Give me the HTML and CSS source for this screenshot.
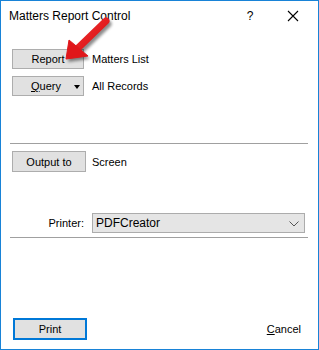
FILE: index.html
```html
<!DOCTYPE html>
<html>
<head>
<meta charset="utf-8">
<link rel="stylesheet" href="styles.css">
</head>
<body>
<div class="window">
  <div class="titlebar">
    <span class="title">Matters Report Control</span>
    <span class="help">?</span>
    <span class="close"><svg width="12" height="12" viewBox="0 0 12 12"><path d="M1 1 L11 11 M11 1 L1 11" stroke="#000" stroke-width="1.1" fill="none"/></svg></span>
  </div>
  <div class="body">
    <div class="row r1"><button class="btn report">Report</button><span class="val">Matters List</span></div>
    <div class="row r2"><button class="btn query"><span class="lbl"><u>Q</u>uery</span><span class="tri"></span></button><span class="val">All Records</span></div>
    <div class="sep s1"></div>
    <div class="row r3"><button class="btn output">Output to</button><span class="val">Screen</span></div>
    <div class="row printer">
      <span class="plabel">Printer:</span>
      <div class="select"><span>PDFCreator</span><svg class="chev" width="10" height="6" viewBox="0 0 10 6"><path d="M0.5 0.5 L5 5 L9.5 0.5" stroke="#555" stroke-width="1" fill="none"/></svg></div>
    </div>
    <div class="sep s2"></div>
    <div class="footer"><button class="btn print">Print</button><span class="cancel"><u>C</u>ancel</span></div>
  </div>
  <svg class="arrow" width="319" height="350" viewBox="0 0 319 350">
    <defs>
      <filter id="blur" x="-20%" y="-20%" width="140%" height="140%"><feGaussianBlur stdDeviation="1.5"/></filter>
      <linearGradient id="red" x1="0" y1="0" x2="1" y2="1">
        <stop offset="0" stop-color="#f03030"/>
        <stop offset="1" stop-color="#d80f12"/>
      </linearGradient>
    </defs>
    <g transform="translate(2,3)" filter="url(#blur)" opacity="0.45">
      <path d="M78 48 L106 21" stroke="#000" stroke-width="7" stroke-linecap="round"/>
      <path d="M66 59 L69 40 L88 56 Z" fill="#000"/>
    </g>
    <path d="M78 48 L106 21" stroke="url(#red)" stroke-width="7" stroke-linecap="round"/>
    <path d="M66 59 L69 40 L88 56 Z" fill="#e0161a" stroke="#e0161a" stroke-width="1" stroke-linejoin="round"/>
  </svg>
</div>
</body>
</html>
```
FILE: styles.css
```css
html, body {
  margin: 0;
  padding: 0;
  background: #fff;
}
.window {
  position: relative;
  width: 319px;
  height: 350px;
  box-sizing: border-box;
  border: 1px solid #1883d7;
  background: #fff;
  font-family: "Liberation Sans", Arial, sans-serif;
  font-size: 11px;
  color: #000;
  display: flex;
  flex-direction: column;
}
.titlebar {
  height: 30px;
  display: flex;
  align-items: center;
  padding-left: 8px;
}
.title {
  font-size: 12px;
  flex: 1;
}
.help {
  font-size: 12px;
  width: 12px;
  margin-right: 31px;
  text-align: center;
}
.close {
  display: flex;
  width: 12px;
  margin-right: 19px;
}
.body {
  padding: 18px 0 0 11px;
  display: flex;
  flex-direction: column;
}
.row {
  display: flex;
  align-items: center;
}
.btn {
  box-sizing: border-box;
  height: 20px;
  background: #e1e1e1;
  border: 1px solid #adadad;
  font-family: "Liberation Sans", Arial, sans-serif;
  font-size: 11px;
  color: #000;
  padding: 0;
  margin: 0;
  display: flex;
  align-items: center;
  justify-content: center;
}
.report { width: 72px; margin-right: 8px; }
.r2 { margin-top: 7px; }
.query {
  width: 72px;
  margin-right: 8px;
  justify-content: flex-start;
  padding-left: 18px;
}
.query .lbl { flex: 1; text-align: left; }
.tri {
  width: 0;
  height: 0;
  border-left: 3.5px solid transparent;
  border-right: 3.5px solid transparent;
  border-top: 4px solid #000;
  margin-right: 3px;
  margin-top: 1px;
}
.sep {
  height: 1px;
  background: #a0a0a0;
  width: 298px;
  margin-left: -2px;
}
.s1 { margin-top: 47px; }
.r3 { margin-top: 7px; }
.output { width: 74px; height: 21px; margin-right: 6px; }
.printer { margin-top: 41px; }
.plabel {
  width: 72px;
  text-align: right;
  margin-right: 8px;
}
.select {
  box-sizing: border-box;
  width: 213px;
  height: 20px;
  background: #e5e5e5;
  border: 1px solid #acacac;
  display: flex;
  align-items: center;
  padding-left: 3px;
  padding-right: 5px;
  font-size: 12px;
}
.select span { flex: 1; }
.chev { margin-top: 1px; }
.s2 { margin-top: 4px; }
.footer {
  margin-top: 80px;
  display: flex;
  align-items: center;
  padding-right: 17px;
}
.print {
  width: 74px;
  height: 22px;
  border: 2px solid #0078d7;
  margin-left: 1px;
}
.cancel {
  margin-left: auto;
}
.arrow {
  position: absolute;
  left: -1px;
  top: -1px;
  pointer-events: none;
}
```
